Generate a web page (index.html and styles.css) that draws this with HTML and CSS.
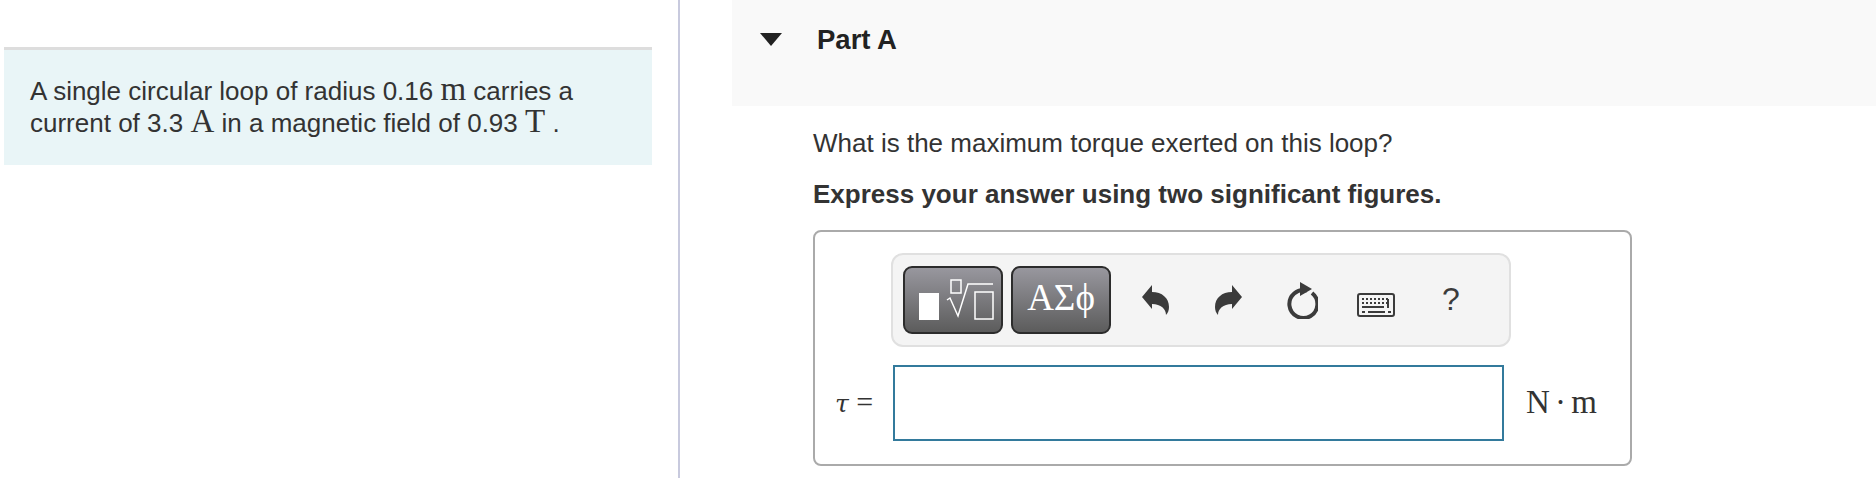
FILE: index.html
```html
<!DOCTYPE html>
<html>
<head>
  <title>Part A</title>
  <link rel="stylesheet" href="styles.css">
</head>
<body>
  <div class="layout">
    <div class="left-col">
      <div class="intro">
        A single circular loop of radius 0.16 <span class="math">m</span> carries a<br>
        current of 3.3 <span class="math">A</span> in a magnetic field of 0.93 <span class="math">T</span> .
      </div>
    </div>
    <div class="right-col">
      <div class="part-header">
        <span class="arrow"></span>
        <span class="part-title">Part A</span>
      </div>
      <div class="part-body">
        <p class="question">What is the maximum torque exerted on this loop?</p>
        <p class="instruction">Express your answer using two significant figures.</p>
        <div class="answer-box">
          <div class="toolbar">
            <div class="tool-btn">
              <svg width="96" height="64" viewBox="0 0 96 64">
                <rect x="14" y="25" width="20" height="27" fill="#fff"/>
                <rect x="46" y="12" width="10" height="13" fill="none" stroke="#fff" stroke-width="1.5"/>
                <path d="M42 32l3-2 8 18 10-32h25" fill="none" stroke="#fff" stroke-width="1.5"/>
                <rect x="70" y="24" width="18" height="27" fill="none" stroke="#fff" stroke-width="1.5"/>
              </svg>
            </div>
            <div class="tool-btn greek">ΑΣϕ</div>
            <div class="tool-icon icon-undo">
              <svg width="27" height="30" viewBox="0 0 27 30"><path d="M0 12L10 0v7c10 0 17 6 17 15 0 3-1 6-3 8 0-6-5-11-14-11v5z" fill="#3b3b3b"/></svg>
            </div>
            <div class="tool-icon icon-redo">
              <svg width="27" height="30" viewBox="0 0 27 30"><path d="M27 12L17 0v7C7 7 0 13 0 22c0 3 1 6 3 8 0-6 5-11 14-11v5z" fill="#3b3b3b"/></svg>
            </div>
            <div class="tool-icon icon-reset">
              <svg width="34" height="38" viewBox="0 0 34 38">
                <path d="M23 9.500A14 14 0 1 0 28 12" fill="none" stroke="#3b3b3b" stroke-width="4"/>
                <path d="M16 1l12 7-12 7z" fill="#3b3b3b"/>
              </svg>
            </div>
            <div class="tool-icon icon-keys">
              <svg width="38" height="24" viewBox="0 0 38 24">
                <rect x="1" y="1" width="36" height="22" rx="2" fill="none" stroke="#3b3b3b" stroke-width="2"/>
                <path d="M5 6h28M5 10h28" stroke="#3b3b3b" stroke-width="2" stroke-dasharray="2 2"/>
                <path d="M5 14h22M31 6v9" stroke="#3b3b3b" stroke-width="2"/>
                <path d="M5 19h3M11 19h17M31 19h3" stroke="#3b3b3b" stroke-width="2"/>
              </svg>
            </div>
            <div class="tool-icon help">?</div>
          </div>
          <div class="input-row">
            <span class="var-label"><i>τ</i> =</span>
            <div class="answer-input"></div>
            <span class="units">N · m</span>
          </div>
        </div>
      </div>
    </div>
  </div>
</body>
</html>
```

FILE: styles.css
```css
html, body {
  margin: 0;
  padding: 0;
  height: 478px;
  overflow: hidden;
  background-color: #fff;
}

body {
  font-family: "Liberation Sans", Arial, sans-serif;
  font-size: 26px;
  line-height: 32px;
  color: #333;
}

.layout {
  display: flex;
  height: 478px;
}

.left-col {
  width: 680px;
  flex: none;
  box-sizing: border-box;
  padding: 47px 26px 0 4px;
  border-right: 2px solid #c8cade;
}

.intro {
  background-color: #e9f5f7;
  border-top: 3px solid #ddd;
  padding: 25px 0 26px 26px;
}

.math {
  font-family: "Liberation Serif", serif;
  font-size: 33px;
  line-height: 26px;
}

.right-col {
  flex: 1;
  margin-left: 52px;
}

.part-header {
  display: flex;
  align-items: flex-start;
  height: 106px;
  box-sizing: border-box;
  padding: 24px 0 0 28px;
  background-color: #f9f9f9;
}

.arrow {
  width: 0;
  height: 0;
  margin-top: 9px;
  border-left: 11px solid transparent;
  border-right: 11px solid transparent;
  border-top: 13px solid #222;
}

.part-title {
  margin-left: 35px;
  font-size: 27.500px;
  font-weight: bold;
  color: #222;
}

.part-body {
  padding-left: 81px;
}

.question {
  margin: 21px 0 0;
}

.instruction {
  margin: 19px 0 0;
  font-weight: bold;
}

.answer-box {
  width: 819px;
  height: 236px;
  box-sizing: border-box;
  margin-top: 20px;
  padding: 21px 0 0 76px;
  border: 2px solid #aaa;
  border-radius: 8px;
}

.toolbar {
  display: flex;
  align-items: center;
  width: 620px;
  height: 94px;
  box-sizing: border-box;
  padding-left: 10px;
  background-color: #f4f4f4;
  border: 2px solid #e0e0e0;
  border-radius: 12px;
}

.tool-btn {
  display: flex;
  align-items: center;
  justify-content: center;
  width: 100px;
  height: 68px;
  box-sizing: border-box;
  margin-right: 8px;
  background: linear-gradient(#98979e, #5c5c5c);
  border: 2px solid #2c2c2c;
  border-radius: 9px;
}

.tool-btn.greek {
  padding-bottom: 4px;
  font-family: "Liberation Serif", serif;
  font-size: 37px;
  color: #fff;
}

.tool-icon {
  display: flex;
  align-items: center;
  justify-content: center;
  height: 60px;
}

.icon-undo { width: 72px; }
.icon-redo { width: 74px; }
.icon-reset { width: 72px; }
.icon-keys { width: 77px; padding-top: 10px; box-sizing: border-box; }

.help {
  width: 74px;
  padding-bottom: 2px;
  box-sizing: border-box;
  font-size: 32px;
  color: #3b3b3b;
}

.input-row {
  display: flex;
  align-items: center;
  height: 76px;
  margin: 18px 0 0 -56px;
}

.var-label {
  width: 58px;
  flex: none;
  font-family: "Liberation Serif", serif;
  font-size: 30px;
  white-space: nowrap;
}

.var-label i {
  font-family: "DejaVu Serif", serif;
  font-size: 25px;
}

.answer-input {
  width: 611px;
  height: 76px;
  box-sizing: border-box;
  flex: none;
  background-color: #fff;
  border: 2px solid #337a9c;
}

.units {
  margin-left: 22px;
  margin-top: -3px;
  font-family: "Liberation Serif", serif;
  font-size: 33px;
  word-spacing: -3px;
  white-space: nowrap;
}
```
